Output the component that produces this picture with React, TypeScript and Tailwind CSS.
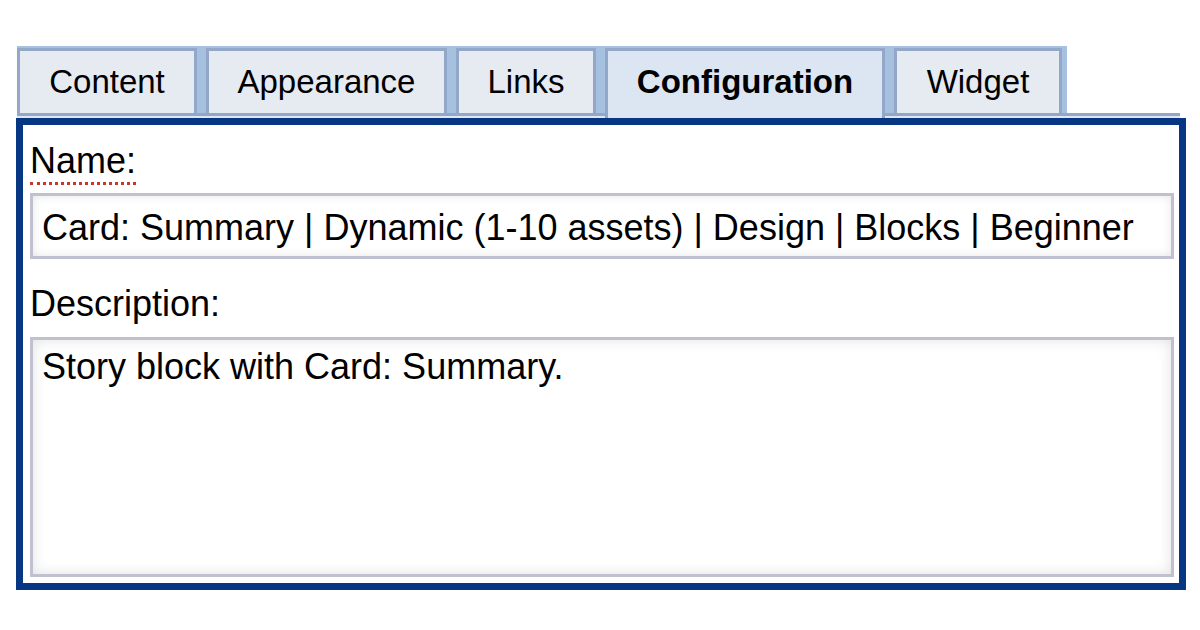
const tabs = [
  { id: "content", label: "Content", width: "w-[180px]" },
  { id: "appearance", label: "Appearance", width: "w-[241px]" },
  { id: "links", label: "Links", width: "w-[140px]" },
  { id: "configuration", label: "Configuration", width: "w-[280px]" },
  { id: "widget", label: "Widget", width: "w-[168px]" },
];

export default function App() {
  const activeTab = "configuration";

  return (
    <div className="h-[630px] w-[1200px] bg-white pt-[46px] font-['Liberation_Sans',Arial,sans-serif] text-[36px] text-black">
      <div className="ml-[17px] w-[1163px] border-b-[3px] border-[#93a8c8]">
        <div className="flex w-fit gap-[9px] bg-[#a6c0e0] pr-[5px] pt-[2px]">
          {tabs.map((tab) => {
            const active = tab.id === activeTab;
            return (
              <div
                className={`${tab.width} self-start border-x-[3px] border-t-[3px] border-[#93a8c8] text-center text-[33px] leading-[62px] ${
                  active
                    ? "relative z-10 -mb-[5px] h-[70px] bg-[#dce6f2] font-bold"
                    : "h-[65px] bg-[#e6eaf1]"
                }`}
                key={tab.id}
              >
                {tab.label}
              </div>
            );
          })}
        </div>
      </div>
      <div className="ml-[17px] h-[2px] w-[1163px] bg-[#e1e7f0]" />

      <section className="ml-[16px] h-[472px] w-[1170px] border-[7px] border-[#073683] pl-[7px] pt-[15px]">
        <div className="w-fit border-b-[3px] border-dotted border-[#c0392b] leading-[42px]">
          Name:
        </div>
        <div className="mt-[8px] h-[66px] w-[1144px] border-[3px] border-[#c0c1d0] bg-white pl-[9px] pt-[2px] leading-[60px] whitespace-nowrap shadow-[inset_0_0_10px_rgba(0,0,0,0.1)]">
          Card: Summary | Dynamic (1-10 assets) | Design | Blocks | Beginner
        </div>
        <p className="mt-[24px] leading-[42px]">Description:</p>
        <div className="mt-[12px] h-[240px] w-[1144px] border-[3px] border-[#c0c1d0] bg-white pl-[9px] pt-[6px] leading-[42px] shadow-[inset_0_0_14px_rgba(0,0,0,0.12)]">
          Story block with Card: Summary.
        </div>
      </section>
    </div>
  );
}
